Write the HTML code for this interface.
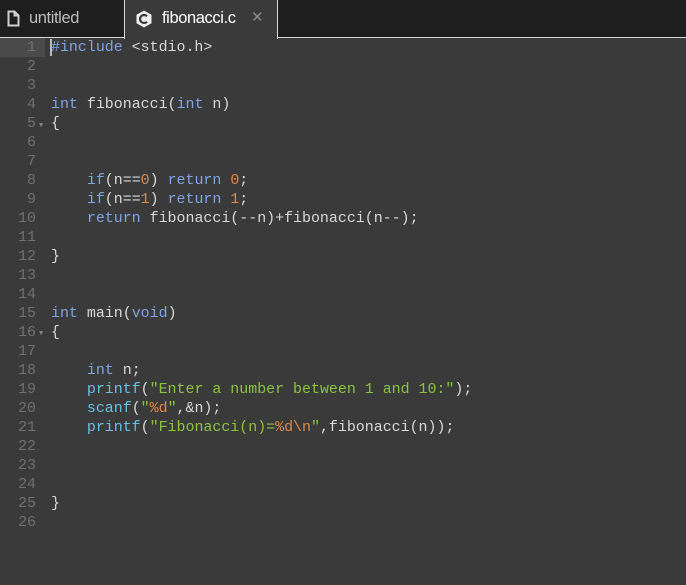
<!DOCTYPE html>
<html><head><style>
*{margin:0;padding:0;box-sizing:border-box}
body{width:686px;height:585px;background:#3a3a3a;overflow:hidden;position:relative;font-family:"Liberation Mono",monospace}
.tabs{position:absolute;left:0;top:0;width:686px;height:38px;background:#1e1e1e;border-bottom:1px solid #d8d8d8}
.tab{position:absolute;top:0;height:38px;font-family:"Liberation Sans",sans-serif;font-size:16.5px;color:#e0e0e0;line-height:36px;letter-spacing:-0.4px}
.t1{left:0;width:124px;color:#bdbdbd}
.t2{left:124px;width:154px;background:#3a3a3a;border-left:1px solid #d8d8d8;border-right:1px solid #d8d8d8;height:39px;color:#fff}
.gut{position:absolute;left:0;top:38px;width:45px;height:19px;background:#4b4b4b}
.code{position:absolute;left:0;top:38.5px;font-size:14.95px;line-height:19px;white-space:pre;color:#d8d8d8}
.ln{display:inline-block;width:36px;text-align:right;color:#707070;margin-right:15px}
.k{color:#7ea4e6}.f{color:#66c2e4}.s{color:#8cc43e}.n{color:#e0884a}
.fold{position:absolute;left:39px;color:#888;font-size:7px}
.cur{position:absolute;left:50px;top:39px;width:2px;height:17px;background:#bbb}
</style></head><body>
<div class="tabs">
<div class="tab t1"><svg style="position:absolute;left:7px;top:10px" width="13" height="17" viewBox="0 0 13 17"><path d="M1.5 1.5h6l4 4v10h-10z M7.5 1.5v4h4" fill="none" stroke="#cfcfcf" stroke-width="2"/></svg><span style="position:absolute;left:29px">untitled</span></div>
<div class="tab t2"><svg style="position:absolute;left:10px;top:10px" width="18" height="18" viewBox="0 0 18 18"><path d="M9 0.5l7.5 4.2v8.6L9 17.5 1.5 13.3V4.7z" fill="#f0f0f0"/><path d="M12 6.3a4 4 0 1 0 0 5.4" fill="none" stroke="#3a3a3a" stroke-width="2.2"/></svg><span style="position:absolute;left:37px">fibonacci.c</span><span style="position:absolute;left:126px;color:#8a8a8a;font-size:15px">✕</span></div>
</div>
<div class="gut"></div>
<div class="cur"></div>
<div class="fold" style="top:122px">▼</div>
<div class="fold" style="top:330px">▼</div>
<div class="code"><span class="ln">1</span><span class="k">#include</span> &lt;stdio.h&gt;
<span class="ln">2</span>
<span class="ln">3</span>
<span class="ln">4</span><span class="k">int</span> fibonacci(<span class="k">int</span> n)
<span class="ln">5</span>{
<span class="ln">6</span>
<span class="ln">7</span>
<span class="ln">8</span>    <span class="k">if</span>(n==<span class="n">0</span>) <span class="k">return</span> <span class="n">0</span>;
<span class="ln">9</span>    <span class="k">if</span>(n==<span class="n">1</span>) <span class="k">return</span> <span class="n">1</span>;
<span class="ln">10</span>    <span class="k">return</span> fibonacci(--n)+fibonacci(n--);
<span class="ln">11</span>
<span class="ln">12</span>}
<span class="ln">13</span>
<span class="ln">14</span>
<span class="ln">15</span><span class="k">int</span> main(<span class="k">void</span>)
<span class="ln">16</span>{
<span class="ln">17</span>
<span class="ln">18</span>    <span class="k">int</span> n;
<span class="ln">19</span>    <span class="f">printf</span>(<span class="s">"Enter a number between 1 and 10:"</span>);
<span class="ln">20</span>    <span class="f">scanf</span>(<span class="s">"</span><span class="n">%d</span><span class="s">"</span>,&amp;n);
<span class="ln">21</span>    <span class="f">printf</span>(<span class="s">"Fibonacci(n)=</span><span class="n">%d\n</span><span class="s">"</span>,fibonacci(n));
<span class="ln">22</span>
<span class="ln">23</span>
<span class="ln">24</span>
<span class="ln">25</span>}
<span class="ln">26</span></div>
</body></html>
